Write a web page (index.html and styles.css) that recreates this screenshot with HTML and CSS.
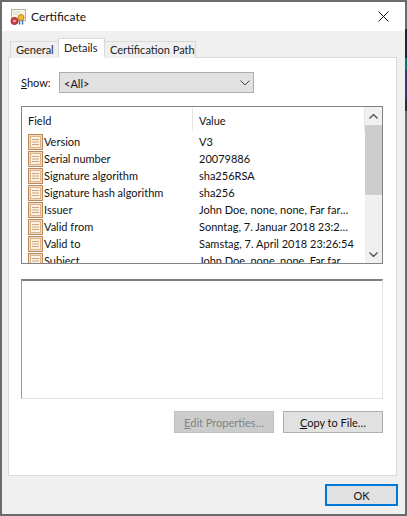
FILE: index.html
```html
<!DOCTYPE html>
<html lang="en">
<head>
    <meta charset="UTF-8">
    <meta name="viewport" content="width=device-width, initial-scale=1.0">
    <title>Certificate</title>
    <link rel="stylesheet" href="styles.css">
</head>
<body>
    <svg class="defs" width="0" height="0">
        <symbol id="field" viewBox="0 0 15 16">
            <rect x="0.5" y="0.5" width="14" height="15" fill="#f3d9bd" stroke="#b98a5e"/>
            <rect x="2.5" y="2.5" width="10" height="11" fill="#fbf1e4" stroke="#dcb48c"/>
            <path d="M4 5.5h7M4 8h7M4 10.5h7" stroke="#cfa57c" fill="none"/>
        </symbol>
    </svg>

    <div class="window">
        <div class="titlebar">
            <svg class="title-icon" width="16" height="16" viewBox="0 0 16 16">
                <rect x="1.5" y="0.5" width="14" height="11" fill="#f7f5ea" stroke="#b7b2a0"/>
                <path d="M3 3h7M3 5h4" stroke="#d8d4c4" fill="none"/>
                <circle cx="4.5" cy="12" r="3.5" fill="#d8404a" stroke="#9c2a33"/>
                <path d="M3 12h3" stroke="#fff" fill="none"/>
                <path d="M9.5 11v4.5M12.5 11v4.5" stroke="#3a6fc4" stroke-width="1.5" fill="none"/>
                <circle cx="11" cy="8.5" r="3" fill="#f2b632" stroke="#c98a1c"/>
            </svg>
            <span class="title-text">Certificate</span>
            <svg class="close" width="11" height="11" viewBox="0 0 11 11">
                <path d="M0.5 0.5l10 10M10.5 0.5l-10 10" stroke="#111" fill="none"/>
            </svg>
        </div>

        <div class="body">
            <div class="tabs">
                <div class="tab tab-general">General</div>
                <div class="tab tab-active">Details</div>
                <div class="tab tab-path">Certification Path</div>
            </div>

            <div class="pane">
                <div class="show-row">
                    <span class="show-label"><u>S</u>how:</span>
                    <div class="select">
                        <span>&lt;All&gt;</span>
                        <svg width="10" height="6" viewBox="0 0 10 6">
                            <path d="M0.5 0.5l4.5 4.5 4.5-4.5" stroke="#444" fill="none"/>
                        </svg>
                    </div>
                </div>

                <div class="list">
                    <div class="list-main">
                        <div class="list-head">
                            <div class="col-field">Field</div>
                            <div class="col-value">Value</div>
                        </div>
                        <div class="row"><div class="col-field"><svg class="icon"><use href="#field"/></svg>Version</div><div class="col-value">V3</div></div>
                        <div class="row"><div class="col-field"><svg class="icon"><use href="#field"/></svg>Serial number</div><div class="col-value">20079886</div></div>
                        <div class="row"><div class="col-field"><svg class="icon"><use href="#field"/></svg>Signature algorithm</div><div class="col-value">sha256RSA</div></div>
                        <div class="row"><div class="col-field"><svg class="icon"><use href="#field"/></svg>Signature hash algorithm</div><div class="col-value">sha256</div></div>
                        <div class="row"><div class="col-field"><svg class="icon"><use href="#field"/></svg>Issuer</div><div class="col-value">John Doe, none, none, Far far…</div></div>
                        <div class="row"><div class="col-field"><svg class="icon"><use href="#field"/></svg>Valid from</div><div class="col-value">Sonntag, 7. Januar 2018 23:2…</div></div>
                        <div class="row"><div class="col-field"><svg class="icon"><use href="#field"/></svg>Valid to</div><div class="col-value">Samstag, 7. April 2018 23:26:54</div></div>
                        <div class="row"><div class="col-field"><svg class="icon"><use href="#field"/></svg>Subject</div><div class="col-value">John Doe, none, none, Far far…</div></div>
                    </div>
                    <div class="scrollbar">
                        <svg class="arrow" width="9" height="5" viewBox="0 0 9 5"><path d="M0.5 4.5l4-4 4 4" stroke="#555" stroke-width="1.4" fill="none"/></svg>
                        <div class="thumb"></div>
                        <svg class="arrow arrow-down" width="9" height="5" viewBox="0 0 9 5"><path d="M0.5 0.5l4 4 4-4" stroke="#555" stroke-width="1.4" fill="none"/></svg>
                    </div>
                </div>

                <div class="detail"></div>

                <div class="pane-buttons">
                    <div class="btn btn-disabled"><span><u>E</u>dit Properties…</span></div>
                    <div class="btn"><span><u>C</u>opy to File…</span></div>
                </div>
            </div>

            <div class="footer">
                <div class="btn btn-ok">OK</div>
            </div>
        </div>
    </div>
</body>
</html>
```

FILE: styles.css
```css
html, body {
    margin: 0;
    height: 516px;
    overflow: hidden;
}

body {
    background: linear-gradient(#232336 0, #232336 35%, #1a6a70 35%, #1a6a70 50%, #40356e 50%, #40356e 85%, #2c2c3c 85%) right 29px / 2px 82px no-repeat #6b6b6b;
    font-family: Lato, "Open Sans", sans-serif;
    font-size: 11px;
    color: #111;
}

.defs {
    display: block;
    height: 0;
}

.window {
    width: 403px;
    height: 512px;
    margin: 2px 2px;
    background: #f0f0f0;
    display: flex;
    flex-direction: column;
}

.titlebar {
    height: 29px;
    background: white;
    display: flex;
    align-items: center;
    padding: 0 16px 0 8px;
    flex: none;
}

.title-text {
    margin-left: 5px;
    font-size: 12px;
    flex: 1;
}

.body {
    flex: 1;
    display: flex;
    flex-direction: column;
    padding: 7px 8px 0 6px;
}

.tabs {
    display: flex;
    align-items: flex-end;
    height: 20px;
    padding-left: 2px;
    margin-bottom: -1px;
    position: relative;
}

.tab {
    height: 17px;
    line-height: 16px;
    box-sizing: border-box;
    padding: 0 5px;
    background: #f0f0f0;
    border: 1px solid #d9d9d9;
    border-bottom: none;
    color: #222;
    white-space: nowrap;
}

.tab-general {
    width: 48px;
    border-right: none;
}

.tab-active {
    width: 47px;
    height: 20px;
    line-height: 17px;
    background: white;
    border-bottom: 1px solid white;
}

.tab-path {
    width: 91px;
    border-left: none;
}

.pane {
    height: 419px;
    box-sizing: border-box;
    background: white;
    border: 1px solid #d9d9d9;
    padding: 14px 12px 0 12px;
}

.show-row {
    display: flex;
    align-items: center;
    height: 21px;
}

.show-label {
    width: 38px;
}

.select {
    width: 195px;
    height: 21px;
    box-sizing: border-box;
    background: #e1e1e1;
    border: 1px solid #adadad;
    display: flex;
    align-items: center;
    justify-content: space-between;
    padding: 1px 3px 0 4px;
}

.list {
    margin-top: 13px;
    width: 362px;
    height: 158px;
    box-sizing: border-box;
    border: 1px solid #828282;
    display: flex;
    overflow: hidden;
}

.list-main {
    flex: 1;
    overflow: hidden;
}

.list-head {
    display: flex;
    height: 26px;
}

.list-head .col-field {
    border-right: 1px solid #e5e5e5;
    margin-top: 1px;
    height: 23px;
    padding-top: 2px;
}

.list-head .col-value {
    flex: 1;
    padding-left: 6px;
    border-right: 1px solid #e5e5e5;
    margin-top: 1px;
    height: 23px;
    line-height: 25px;
}

.col-field {
    width: 171px;
    padding-left: 6px;
    box-sizing: border-box;
    display: flex;
    align-items: center;
    flex: none;
}

.row {
    display: flex;
    height: 17px;
    line-height: 17px;
    white-space: nowrap;
}

.row .col-value {
    padding-left: 6px;
}

.icon {
    width: 15px;
    height: 16px;
    margin-right: 1px;
    flex: none;
}

.scrollbar {
    width: 17px;
    background: #f0f0f0;
    display: flex;
    flex-direction: column;
    align-items: center;
    flex: none;
}

.arrow {
    margin: 7px 0 6px;
    flex: none;
}

.arrow-down {
    margin: auto 0 6px;
}

.thumb {
    width: 100%;
    height: 70px;
    background: #cdcdcd;
}

.detail {
    margin-top: 15px;
    width: 360px;
    height: 117px;
    border-top: 2px solid #7f7f7f;
    border-left: 1px solid #9a9a9a;
    border-right: 1px solid #e3e3e3;
    border-bottom: 1px solid #e3e3e3;
}

.pane-buttons {
    display: flex;
    justify-content: flex-end;
    gap: 9px;
    margin-top: 12px;
    padding-right: 1px;
}

.btn {
    width: 100px;
    height: 22px;
    box-sizing: border-box;
    background: #e1e1e1;
    border: 1px solid #adadad;
    display: flex;
    align-items: center;
    justify-content: center;
}

.btn-disabled {
    background: #cccccc;
    border-color: #bfbfbf;
    color: #838383;
}

.footer {
    display: flex;
    justify-content: flex-end;
    margin: 8px -1px 0 0;
}

.btn-ok {
    width: 73px;
    height: 22px;
    border: 2px solid #0078d7;
}
```
